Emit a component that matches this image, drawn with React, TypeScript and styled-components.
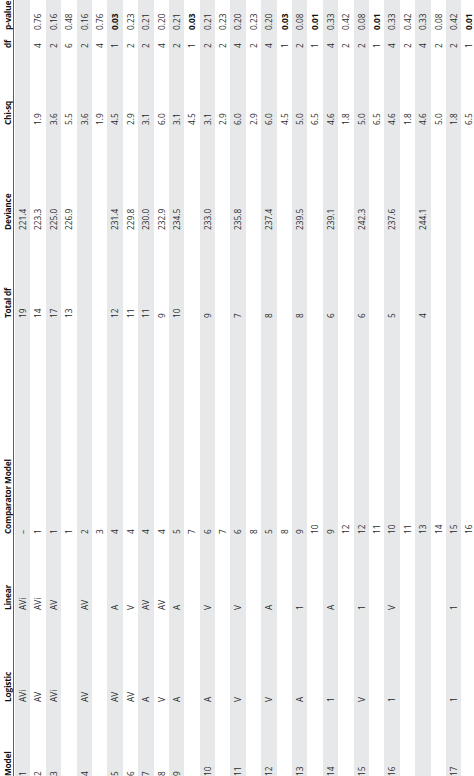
import styled, { createGlobalStyle } from "styled-components";

// the table is laid out upright, then the whole sheet is turned a quarter left
const GlobalStyle = createGlobalStyle`
  html, body {
    margin: 0;
    padding: 0;
    background: #ffffff;
    overflow: hidden;
  }
  #root {
    width: 474px;
    height: 776px;
  }
`;

const Viewport = styled.div`
  width: 474px;
  height: 776px;
  overflow: hidden;
  background: #ffffff;
`;

const Sheet = styled.div`
  width: 776px;
  transform-origin: 0 0;
  transform: translateY(776px) rotate(-90deg);
  font-family: "Open Sans", "Noto Sans", sans-serif;
  font-size: 8.3px;
  color: #2a2a2a;
`;

const COLUMNS = "74px 92px 76px 216px 88px 105px 77px 18px 30px";

const HeaderRow = styled.div`
  display: grid;
  grid-template-columns: ${COLUMNS};
  height: 13px;
  border-bottom: 1px solid #5e5e5e;
  margin-bottom: 1px;
`;

const HeadCell = styled.div`
  display: flex;
  align-items: flex-end;
  padding-bottom: 1px;
  line-height: 1;
  font-weight: 700;
  letter-spacing: -0.2px;
  color: #111111;
  white-space: nowrap;
`;

const Body = styled.div`
  display: flex;
  flex-direction: column;
`;

const Row = styled.div<{ $shade: boolean }>`
  display: grid;
  grid-template-columns: ${COLUMNS};
  height: 15.4px;
  line-height: 15.4px;
  background: ${(p) => (p.$shade ? "#e6e8e9" : "#ffffff")};
`;

const Cell = styled.div<{ $bold?: boolean }>`
  white-space: nowrap;
  font-weight: ${(p) => (p.$bold ? 700 : 400)};
  color: ${(p) => (p.$bold ? "#111111" : "#2a2a2a")};
`;

const headers = [
  "Model",
  "Logistic",
  "Linear",
  "Comparator Model",
  "Total df",
  "Deviance",
  "Chi-sq",
  "df",
  "p-value",
];

// model, logistic, linear, comparator, total df, deviance, chi-sq, df, p
const rows: string[][] = [
  ["1", "AVi", "AVi", "–", "19", "221.4", "", "", ""],
  ["2", "AV", "AVi", "1", "14", "223.3", "1.9", "4", "0.76"],
  ["3", "AVi", "AV", "1", "17", "225.0", "3.6", "2", "0.16"],
  ["", "", "", "1", "13", "226.9", "5.5", "6", "0.48"],
  ["4", "AV", "AV", "2", "", "", "3.6", "2", "0.16"],
  ["", "", "", "3", "", "", "1.9", "4", "0.76"],
  ["5", "AV", "A", "4", "12", "231.4", "4.5", "1", "0.03"],
  ["6", "AV", "V", "4", "11", "229.8", "2.9", "2", "0.23"],
  ["7", "A", "AV", "4", "11", "230.0", "3.1", "2", "0.21"],
  ["8", "V", "AV", "4", "9", "232.9", "6.0", "4", "0.20"],
  ["9", "A", "A", "5", "10", "234.5", "3.1", "2", "0.21"],
  ["", "", "", "7", "", "", "4.5", "1", "0.03"],
  ["10", "A", "V", "6", "9", "233.0", "3.1", "2", "0.21"],
  ["", "", "", "7", "", "", "2.9", "2", "0.23"],
  ["11", "V", "V", "6", "7", "235.8", "6.0", "4", "0.20"],
  ["", "", "", "8", "", "", "2.9", "2", "0.23"],
  ["12", "V", "A", "5", "8", "237.4", "6.0", "4", "0.20"],
  ["", "", "", "8", "", "", "4.5", "1", "0.03"],
  ["13", "A", "1", "9", "8", "239.5", "5.0", "2", "0.08"],
  ["", "", "", "10", "", "", "6.5", "1", "0.01"],
  ["14", "1", "A", "9", "6", "239.1", "4.6", "4", "0.33"],
  ["", "", "", "12", "", "", "1.8", "2", "0.42"],
  ["15", "V", "1", "12", "6", "242.3", "5.0", "2", "0.08"],
  ["", "", "", "11", "", "", "6.5", "1", "0.01"],
  ["16", "1", "V", "10", "5", "237.6", "4.6", "4", "0.33"],
  ["", "", "", "11", "", "", "1.8", "2", "0.42"],
  ["", "", "", "13", "4", "244.1", "4.6", "4", "0.33"],
  ["", "", "", "14", "", "", "5.0", "2", "0.08"],
  ["17", "1", "1", "15", "", "", "1.8", "2", "0.42"],
  ["", "", "", "16", "", "", "6.5", "1", "0.01"],
];

const isSignificant = (p: string) => p !== "" && parseFloat(p) < 0.05;

export default function App() {
  return (
    <>
      <GlobalStyle />
      <Viewport>
        <Sheet>
          <HeaderRow>
            {headers.map((h) => (
              <HeadCell key={h}>{h}</HeadCell>
            ))}
          </HeaderRow>
          <Body>
            {rows.map((r, i) => (
              <Row key={i} $shade={i % 2 === 0}>
                {r.map((c, j) => (
                  <Cell key={j} $bold={j === 8 && isSignificant(c)}>
                    {c}
                  </Cell>
                ))}
              </Row>
            ))}
          </Body>
        </Sheet>
      </Viewport>
    </>
  );
}
